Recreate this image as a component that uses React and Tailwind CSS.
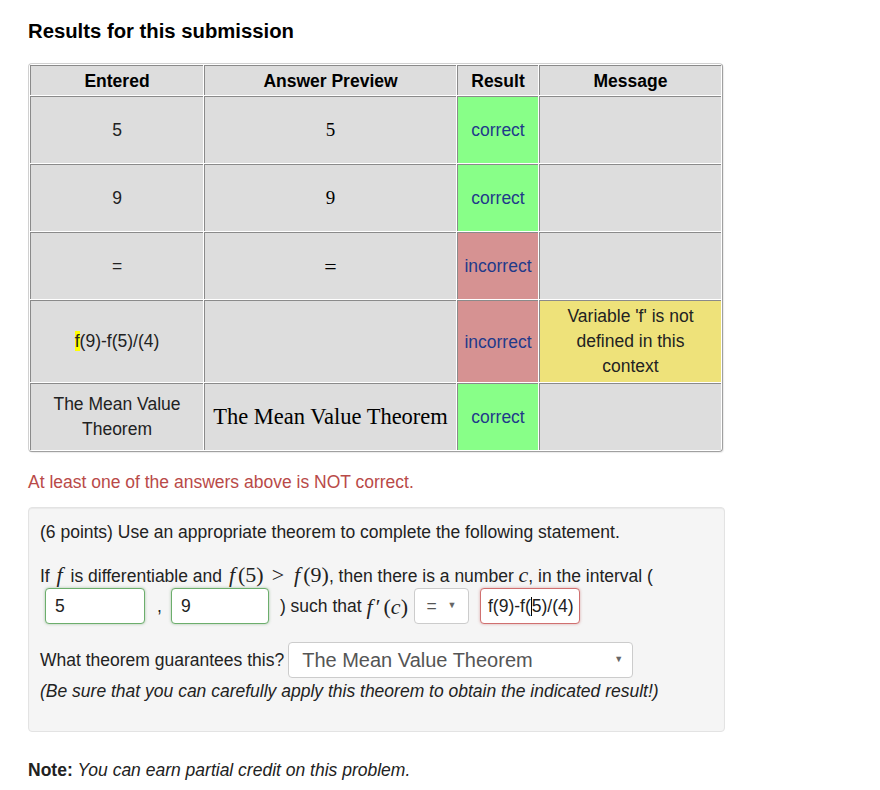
import React from "react";

const rows = [
  { entered: "5", preview: "5", ok: true, h: "h-[67px]" },
  { entered: "9", preview: "9", ok: true, h: "h-[67px]" },
  { entered: "=", preview: "=", ok: false, h: "h-[67px]" },
  {
    entered: (
      <>
        <span className="bg-[#ffff00]">f</span>(9)-f(5)/(4)
      </>
    ),
    preview: "",
    ok: false,
    msg: "Variable 'f' is not defined in this context",
    h: "h-[82px]",
  },
  {
    entered: "The Mean Value Theorem",
    preview: <span className="text-[22.5px]">The Mean Value Theorem</span>,
    ok: true,
    h: "h-[67px]",
  },
];

const cell = "border-t border-l border-[#8a8a8a] text-center align-middle";

function Math({ children, className = "" }) {
  return (
    <span className={`font-['Liberation_Serif',serif] text-[22px] ${className}`}>
      {children}
    </span>
  );
}

function F() {
  return <span className="italic pl-[2px] pr-[3px]">f</span>;
}

export default function App() {
  return (
    <div className="w-[880px] min-h-[790px] bg-white font-['Liberation_Sans',Arial,sans-serif] text-[17.5px] text-[#222]">
      <div className="pl-[28px] pt-[19px]">
        <h2 className="text-[20.3px] font-bold text-black leading-[24px]">
          Results for this submission
        </h2>

        <table className="mt-[20px] table-fixed border-separate border-spacing-[1px] bg-white border border-[#d0d0d0] border-r-[#a0a0a0] border-b-[#a0a0a0] rounded-[4px] shadow-[1px_1px_1px_rgba(0,0,0,0.08)]">
          <thead>
            <tr className="h-[30px]">
              <th className={`${cell} w-[173px] bg-[#dddddd] font-bold text-black leading-[20px]`}>Entered</th>
              <th className={`${cell} w-[252px] bg-[#dddddd] font-bold text-black leading-[20px]`}>Answer Preview</th>
              <th className={`${cell} w-[81px] bg-[#dddddd] font-bold text-black leading-[20px]`}>Result</th>
              <th className={`${cell} w-[182px] bg-[#dddddd] font-bold text-black leading-[20px]`}>Message</th>
            </tr>
          </thead>
          <tbody>
            {rows.map((r, i) => (
              <tr key={i} className={r.h}>
                <td className={`${cell} bg-[#dddddd] leading-[25px] px-[18px] text-[#222]`}>{r.entered}</td>
                <td className={`${cell} bg-[#dddddd] font-['Liberation_Serif',serif] text-[19px] text-black`}>
                  {r.preview === "=" ? <span className="text-[22px]">=</span> : r.preview}
                </td>
                <td className={`${cell} ${r.ok ? "bg-[#88ff88]" : "bg-[#d69292]"} text-[#1f3a8a] leading-[20px]`}>
                  {r.ok ? "correct" : "incorrect"}
                </td>
                <td className={`${cell} ${r.msg ? "bg-[#eee27a]" : "bg-[#dddddd]"} leading-[25px] px-[10px] text-[#222]`}>
                  {r.msg}
                </td>
              </tr>
            ))}
          </tbody>
        </table>

        <p className="mt-[19px] text-[#b94a48] leading-[22px]">
          At least one of the answers above is NOT correct.
        </p>

        <div className="mt-[14px] w-[697px] h-[225px] bg-[#f5f5f5] border border-[#e3e3e3] rounded-[4px] shadow-[inset_0_1px_1px_rgba(0,0,0,0.05)] px-[11px] pt-[14px]">
          <p className="leading-[20px]">
            (6 points) Use an appropriate theorem to complete the following statement.
          </p>

          <p className="mt-[21px] leading-[24px] whitespace-nowrap">
            If <Math><F /></Math> is differentiable and{" "}
            <Math>
              <F />(5)<span className="mx-[8px]">&gt;</span><F />(9)
            </Math>
            , then there is a number <Math><span className="italic">c</span></Math>, in the interval (
          </p>

          <div className="flex items-center mt-0 h-[36px]">
            <div className="ml-[5px] w-[100px] h-[36px] bg-white border border-[#6cae6c] rounded-[4px] shadow-[0_0_3px_rgba(70,136,71,0.45)] flex items-center px-[9px]">
              5
            </div>
            <span className="ml-[12px] mr-[9px]">,</span>
            <div className="w-[98px] h-[36px] bg-white border border-[#6cae6c] rounded-[4px] shadow-[0_0_3px_rgba(70,136,71,0.45)] flex items-center px-[9px]">
              9
            </div>
            <span className="ml-[11px]">) such that</span>
            <Math className="ml-[3px]">
              <F />
              <span className="pr-[3px]">′</span>(<span className="italic">c</span>)
            </Math>
            <div className="ml-[6px] w-[55px] h-[36px] bg-white border border-[#cccccc] rounded-[4px] flex items-center justify-center gap-[11px] text-[#555]">
              <span>=</span>
              <span className="text-[9px] text-[#666]">▼</span>
            </div>
            <div className="ml-[11px] w-[100px] h-[36px] bg-white border border-[#d07070] rounded-[4px] shadow-[0_0_3px_rgba(185,74,72,0.45)] flex items-center pl-[7px] overflow-hidden whitespace-nowrap">
              f(9)-f(
              <span className="inline-block w-px h-[19px] bg-black"></span>
              5)/(4)
            </div>
          </div>

          <div className="flex items-center mt-[18px]">
            <span>What theorem guarantees this?</span>
            <div className="ml-[4px] w-[345px] h-[36px] bg-white border border-[#cccccc] rounded-[4px] flex items-center justify-between pl-[13px] pr-[9px]">
              <span className="text-[20px] text-[#555]">The Mean Value Theorem</span>
              <span className="text-[9px] text-[#666]">▼</span>
            </div>
          </div>
          <p className="mt-[2px] italic leading-[22px]">
            (Be sure that you can carefully apply this theorem to obtain the indicated result!)
          </p>
        </div>

        <p className="mt-[27px] leading-[22px]">
          <span className="font-bold">Note:</span>{" "}
          <span className="italic">You can earn partial credit on this problem.</span>
        </p>
      </div>
    </div>
  );
}
